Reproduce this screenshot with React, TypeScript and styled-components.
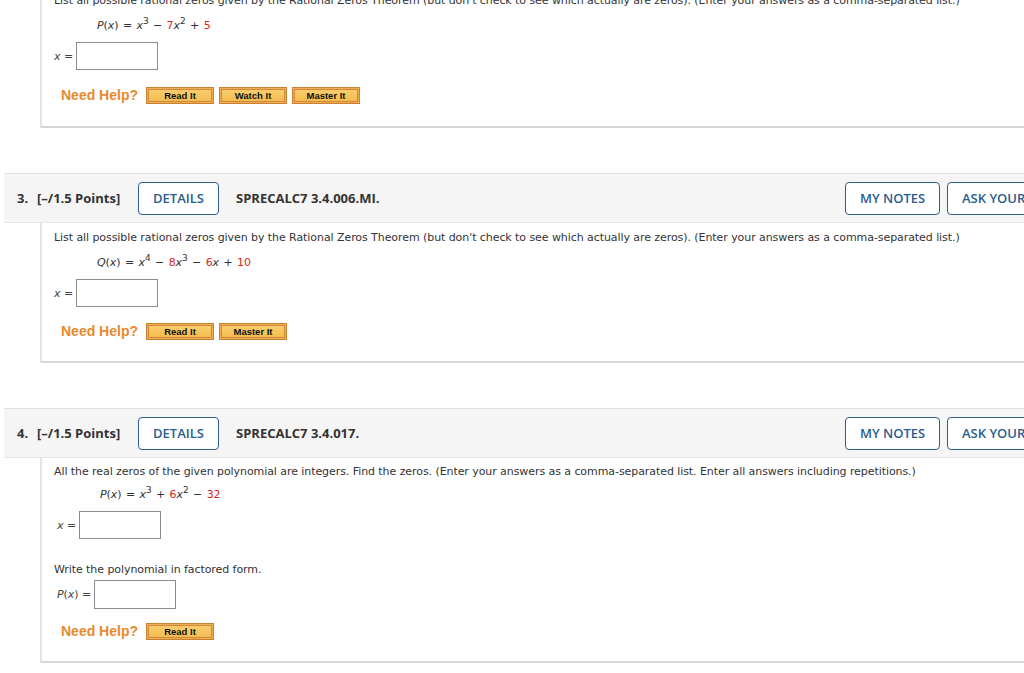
import React from "react";
import styled, { createGlobalStyle } from "styled-components";

const Global = createGlobalStyle`
  html, body { margin: 0; padding: 0; background: #fff; overflow: hidden; }
  body { width: 1024px; height: 673px; }
`;

const Page = styled.div`
  width: 1063px;
  margin-top: -13px;
  padding-left: 4px;
  font-family: "DejaVu Sans", Verdana, sans-serif;
  color: #333;
`;

const Question = styled.section<{ $mb: number }>`
  display: flex;
  flex-direction: column;
  margin-bottom: ${(p) => p.$mb}px;
`;

const Header = styled.header`
  display: flex;
  align-items: center;
  height: 48px;
  background: #f5f5f5;
  border-top: 1px solid #e1e1e1;
  border-bottom: 1px solid #e6e6e6;
  padding-left: 13px;
  font-family: "Open Sans", sans-serif;
  font-weight: 700;
  font-size: 13px;
  color: #333;
`;

const Num = styled.span`
  width: 20px;
`;

const Points = styled.span`
  width: 101px;
`;

const OutlineButton = styled.button<{ $w: number }>`
  box-sizing: border-box;
  width: ${(p) => p.$w}px;
  height: 33px;
  flex: none;
  border: 1px solid #2f5f8e;
  border-radius: 4px;
  background: #fff;
  color: #2a5d8f;
  font-family: "Open Sans", sans-serif;
  font-weight: 600;
  font-size: 13px;
  padding: 0 0 0 14px;
  text-align: left;
  white-space: nowrap;
`;

const Code = styled.span`
  margin-left: 17px;
  flex: 1;
`;

const RightButtons = styled.div`
  display: flex;
  gap: 7px;
`;

const Body = styled.div<{ $pt: number; $pb: number }>`
  margin-left: 36px;
  border-left: 2px solid #e4e4e4;
  border-bottom: 2px solid #d6d6d6;
  padding: ${(p) => p.$pt}px 0 ${(p) => p.$pb}px 12px;
  display: flex;
  flex-direction: column;
  align-items: flex-start;
  font-size: 11px;
  letter-spacing: -0.07px;
`;

const Text = styled.div<{ $mt?: number }>`
  line-height: 16px;
  margin-top: ${(p) => p.$mt ?? 0}px;
  white-space: nowrap;
`;

const Eq = styled.div<{ $indent: number; $mt: number }>`
  line-height: 16px;
  margin-left: ${(p) => p.$indent}px;
  margin-top: ${(p) => p.$mt}px;
  white-space: nowrap;
  word-spacing: 1px;
`;

const V = styled.i`
  font-style: italic;
`;

const Red = styled.span`
  color: #d8261d;
`;

const Sup = styled.sup`
  font-size: 9px;
  line-height: 0;
  vertical-align: 5px;
`;

const AnswerRow = styled.div<{ $indent: number; $mt: number }>`
  display: flex;
  align-items: center;
  margin-left: ${(p) => p.$indent}px;
  margin-top: ${(p) => p.$mt}px;
  gap: 3px;
  white-space: nowrap;
`;

const Label = styled.span`
  color: #444;
`;

const Input = styled.div<{ $h: number }>`
  box-sizing: border-box;
  width: 82px;
  height: ${(p) => p.$h}px;
  border: 1px solid #8c8c8c;
  background: #fff;
`;

const HelpRow = styled.div<{ $mt: number }>`
  display: flex;
  align-items: center;
  height: 20px;
  margin-left: 7px;
  margin-top: ${(p) => p.$mt}px;
  gap: 5px;
  letter-spacing: 0;
`;

const NeedHelp = styled.span`
  font-family: "Liberation Sans", Arial, sans-serif;
  font-weight: 700;
  font-size: 14px;
  color: #e8892d;
  margin-right: 3px;
`;

const HelpButton = styled.span`
  box-sizing: border-box;
  display: flex;
  width: 68px;
  height: 17px;
  padding: 1px;
  border: 1px solid #c9812f;
  background: #f0ad55;
`;

const HelpInner = styled.span`
  flex: 1;
  display: flex;
  align-items: center;
  justify-content: center;
  border: 1px solid #d2883a;
  background: linear-gradient(#f8cd6c, #f4bd50);
  font-family: "Liberation Sans", Arial, sans-serif;
  font-weight: 700;
  font-size: 9.5px;
  color: #111;
`;

const Help = ({ labels, mt }: { labels: string[]; mt: number }) => (
  <HelpRow $mt={mt}>
    <NeedHelp>Need Help?</NeedHelp>
    {labels.map((l) => (
      <HelpButton key={l}>
        <HelpInner>{l}</HelpInner>
      </HelpButton>
    ))}
  </HelpRow>
);

const QHeader = ({ n, code }: { n: number; code: string }) => (
  <Header>
    <Num>{n}.</Num>
    <Points>[–/1.5 Points]</Points>
    <OutlineButton $w={81}>DETAILS</OutlineButton>
    <Code>{code}</Code>
    <RightButtons>
      <OutlineButton $w={95}>MY NOTES</OutlineButton>
      <OutlineButton $w={120}>ASK YOUR TEACHER</OutlineButton>
    </RightButtons>
  </Header>
);

const listText =
  "List all possible rational zeros given by the Rational Zeros Theorem (but don't check to see which actually are zeros). (Enter your answers as a comma-separated list.)";

export default function App() {
  return (
    <>
      <Global />
      <Page>
        <Question $mb={45}>
          <Body $pt={6} $pb={21}>
            <Text>{listText}</Text>
            <Eq $indent={43} $mt={9}>
              <V>P</V>(<V>x</V>) = <V>x</V>
              <Sup>3</Sup> − <Red>7</Red>
              <V>x</V>
              <Sup>2</Sup> + <Red>5</Red>
            </Eq>
            <AnswerRow $indent={0} $mt={8}>
              <Label>
                <V>x</V> =
              </Label>
              <Input $h={28} />
            </AnswerRow>
            <Help labels={["Read It", "Watch It", "Master It"]} mt={15} />
          </Body>
        </Question>

        <Question $mb={45}>
          <QHeader n={3} code="SPRECALC7 3.4.006.MI." />
          <Body $pt={7} $pb={20}>
            <Text>{listText}</Text>
            <Eq $indent={43} $mt={9}>
              <V>Q</V>(<V>x</V>) = <V>x</V>
              <Sup>4</Sup> − <Red>8</Red>
              <V>x</V>
              <Sup>3</Sup> − <Red>6</Red>
              <V>x</V> + <Red>10</Red>
            </Eq>
            <AnswerRow $indent={0} $mt={8}>
              <Label>
                <V>x</V> =
              </Label>
              <Input $h={28} />
            </AnswerRow>
            <Help labels={["Read It", "Master It"]} mt={14} />
          </Body>
        </Question>

        <Question $mb={45}>
          <QHeader n={4} code="SPRECALC7 3.4.017." />
          <Body $pt={6} $pb={20}>
            <Text>
              All the real zeros of the given polynomial are integers. Find the zeros. (Enter your answers as a
              comma-separated list. Enter all answers including repetitions.)
            </Text>
            <Eq $indent={46} $mt={7}>
              <V>P</V>(<V>x</V>) = <V>x</V>
              <Sup>3</Sup> + <Red>6</Red>
              <V>x</V>
              <Sup>2</Sup> − <Red>32</Red>
            </Eq>
            <AnswerRow $indent={3} $mt={8}>
              <Label>
                <V>x</V> =
              </Label>
              <Input $h={28} />
            </AnswerRow>
            <Text $mt={23}>Write the polynomial in factored form.</Text>
            <AnswerRow $indent={3} $mt={2}>
              <Label>
                <V>P</V>(<V>x</V>) =
              </Label>
              <Input $h={29} />
            </AnswerRow>
            <Help labels={["Read It"]} mt={12} />
          </Body>
        </Question>
      </Page>
    </>
  );
}
